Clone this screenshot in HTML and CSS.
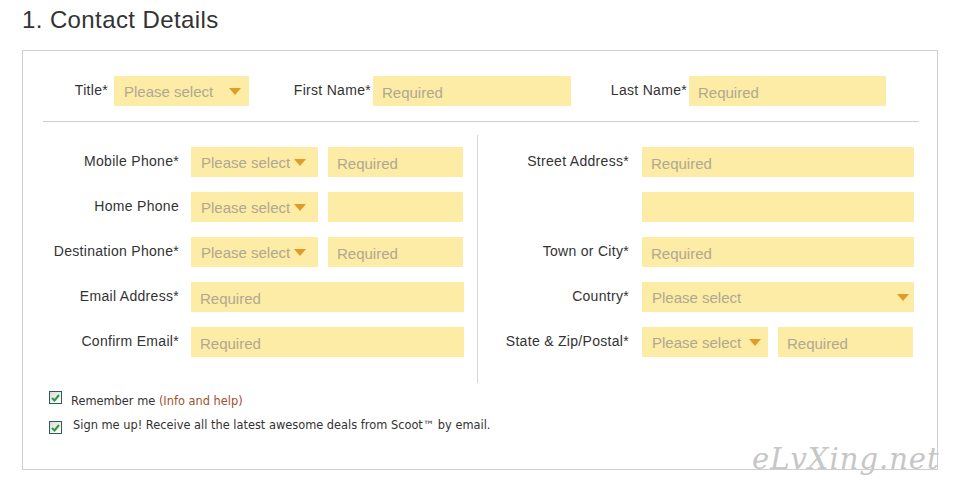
FILE: index.html
```html
<!DOCTYPE html>
<html lang="en">
<head>
  <meta charset="UTF-8">
  <meta name="viewport" content="width=device-width, initial-scale=1.0">
  <title>Contact Details</title>
  <link rel="stylesheet" href="styles.css">
</head>
<body>
  <h1 class="heading">1. Contact Details</h1>
  <div class="panel">
    <div class="name-row">
      <label class="lbl lbl-title">Title*</label>
      <div class="select w-title"><span>Please select</span><svg class="arrow" width="12" height="7" viewBox="0 0 12 7"><polygon points="0,0 12,0 6,7"/></svg></div>
      <label class="lbl lbl-first">First Name*</label>
      <input class="field w-first" placeholder="Required">
      <label class="lbl lbl-last">Last Name*</label>
      <input class="field w-last" placeholder="Required">
    </div>
    <hr class="rule">
    <div class="columns">
      <div class="col col-left">
        <div class="row">
          <label class="lbl">Mobile Phone*</label>
          <div class="select w-code"><span>Please select</span><svg class="arrow" width="12" height="7" viewBox="0 0 12 7"><polygon points="0,0 12,0 6,7"/></svg></div>
          <input class="field w-num" placeholder="Required">
        </div>
        <div class="row">
          <label class="lbl">Home Phone</label>
          <div class="select w-code"><span>Please select</span><svg class="arrow" width="12" height="7" viewBox="0 0 12 7"><polygon points="0,0 12,0 6,7"/></svg></div>
          <input class="field w-num">
        </div>
        <div class="row">
          <label class="lbl">Destination Phone*</label>
          <div class="select w-code"><span>Please select</span><svg class="arrow" width="12" height="7" viewBox="0 0 12 7"><polygon points="0,0 12,0 6,7"/></svg></div>
          <input class="field w-num" placeholder="Required">
        </div>
        <div class="row">
          <label class="lbl">Email Address*</label>
          <input class="field w-email" placeholder="Required">
        </div>
        <div class="row">
          <label class="lbl">Confirm Email*</label>
          <input class="field w-email" placeholder="Required">
        </div>
      </div>
      <div class="col col-right">
        <div class="row">
          <label class="lbl">Street Address*</label>
          <input class="field w-addr" placeholder="Required">
        </div>
        <div class="row">
          <label class="lbl"></label>
          <input class="field w-addr">
        </div>
        <div class="row">
          <label class="lbl">Town or City*</label>
          <input class="field w-addr" placeholder="Required">
        </div>
        <div class="row">
          <label class="lbl">Country*</label>
          <div class="select w-addr"><span>Please select</span><svg class="arrow" width="12" height="7" viewBox="0 0 12 7"><polygon points="0,0 12,0 6,7"/></svg></div>
        </div>
        <div class="row">
          <label class="lbl">State &amp; Zip/Postal*</label>
          <div class="select w-state"><span>Please select</span><svg class="arrow" width="12" height="7" viewBox="0 0 12 7"><polygon points="0,0 12,0 6,7"/></svg></div>
          <input class="field w-zip" placeholder="Required">
        </div>
      </div>
    </div>
    <div class="checks">
      <div class="check-row first">
        <span class="tick"><svg width="9" height="8" viewBox="0 0 9 8"><polyline points="1,4 3.5,6.5 8,1"/></svg></span>
        <span class="check-text">Remember me <a class="help" href="#">(Info and help)</a></span>
      </div>
      <div class="check-row second">
        <span class="tick"><svg width="9" height="8" viewBox="0 0 9 8"><polyline points="1,4 3.5,6.5 8,1"/></svg></span>
        <span class="check-text">Sign me up! Receive all the latest awesome deals from Scoot™ by email.</span>
      </div>
    </div>
  </div>
  <div class="watermark">eLvXing.net</div>
</body>
</html>
```

FILE: styles.css
```css
body {
  margin: 0;
  font-family: "Liberation Sans", Arial, sans-serif;
  color: #333;
  background: #fff;
}
.heading {
  margin: 6px 0 16px 22px;
  font-size: 24px;
  line-height: 28px;
  letter-spacing: 0.4px;
  font-weight: normal;
  color: #333;
}
.panel {
  box-sizing: border-box;
  width: 916px;
  height: 420px;
  margin-left: 22px;
  border: 1px solid #cfcfcf;
}
.name-row {
  display: flex;
  align-items: flex-start;
  padding-top: 25px;
}
.lbl {
  box-sizing: border-box;
  font-size: 14px;
  line-height: 16px;
  letter-spacing: 0.3px;
  padding-top: 6px;
  text-align: right;
  color: #333;
  flex-shrink: 0;
}
.lbl-title {
  width: 85px;
  margin-right: 6px;
}
.lbl-first {
  width: 122px;
  margin-right: 2px;
}
.lbl-last {
  width: 116px;
  margin-right: 2px;
}
.field,
.select {
  box-sizing: border-box;
  height: 30px;
  border: none;
  margin: 0;
  background: #fdeca6;
  font-family: "Liberation Sans", Arial, sans-serif;
  font-size: 15px;
  line-height: 28px;
  color: #b0a892;
  flex-shrink: 0;
}
.field {
  padding: 2px 0 0 9px;
  outline: none;
}
.field::placeholder {
  color: #b0a892;
  opacity: 1;
}
.select {
  display: flex;
  align-items: center;
  justify-content: space-between;
  padding: 2px 8px 0 10px;
}
.arrow {
  fill: #e19c28;
  margin-top: -2px;
}
.w-title { width: 135px; }
.w-first { width: 198px; }
.w-last { width: 197px; }
.w-code { width: 127px; padding-right: 12px; }
.w-num { width: 135px; margin-left: 10px; }
.w-email { width: 273px; }
.w-addr { width: 272px; padding-right: 5px; }
.w-state { width: 126px; padding-right: 7px; }
.w-zip { width: 135px; margin-left: 10px; }
.rule {
  height: 1px;
  border: none;
  background: #cfcfcf;
  margin: 15px 18px 0 20px;
}
.columns {
  display: flex;
  margin-top: 13px;
}
.col {
  display: flex;
  flex-direction: column;
  gap: 15px;
  padding: 12px 0 26px;
}
.col-left {
  width: 454px;
}
.col-right {
  border-left: 1px solid #d4d4d4;
}
.row {
  display: flex;
  align-items: flex-start;
}
.col-left .lbl {
  width: 156px;
  margin-right: 12px;
}
.col-right .lbl {
  width: 151px;
  margin-right: 13px;
}
.checks {
  padding: 8px 0 0 26px;
  font-family: "DejaVu Sans", Verdana, sans-serif;
  font-size: 11.4px;
  line-height: 16px;
}
.check-row {
  display: flex;
  align-items: flex-start;
}
.check-row.second {
  margin-top: 8px;
}
.tick {
  box-sizing: border-box;
  width: 13px;
  height: 13px;
  border: 1px solid #2e5a5e;
  background: linear-gradient(135deg, #dcdcdc, #fff);
  display: flex;
  align-items: center;
  justify-content: center;
}
.tick polyline {
  fill: none;
  stroke: #2f9a3e;
  stroke-width: 2;
}
.first .check-text {
  margin: 2px 0 0 9px;
}
.second .tick {
  margin-top: 4px;
}
.second .check-text {
  margin-left: 11px;
}
.help {
  color: #a0522d;
  text-decoration: none;
}
.watermark {
  position: absolute;
  left: 752px;
  top: 442px;
  font-family: "DejaVu Serif", serif;
  font-style: italic;
  font-size: 29px;
  color: #c6c6c6;
  letter-spacing: 1px;
}
```
